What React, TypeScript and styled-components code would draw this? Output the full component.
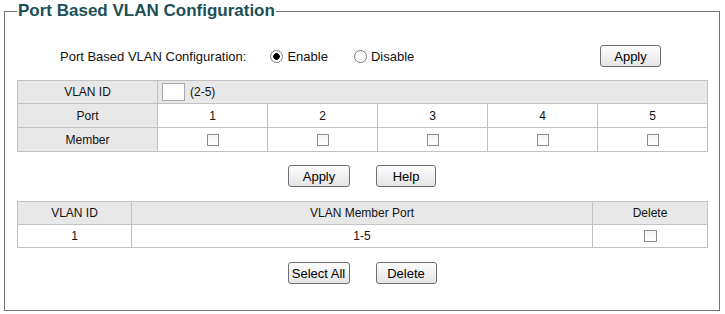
import React from "react";
import styled, { createGlobalStyle } from "styled-components";

const GlobalStyle = createGlobalStyle`
  html, body { margin: 0; padding: 0; background: #ffffff; }
  body { font-family: "Liberation Sans", Arial, sans-serif; color: #111; }
  * { box-sizing: border-box; }
`;

const Frame = styled.fieldset`
  margin: 0 0 0 4px;
  width: 716px;
  height: 311px;
  border: 1px solid #737373;
  padding: 0 12px;
  min-width: 0;
`;

const Legend = styled.legend`
  margin-left: 0;
  padding: 0 1px;
  font-size: 17px;
  line-height: 22px;
  font-weight: bold;
  color: #1b5058;
`;

const ConfigRow = styled.div`
  display: flex;
  align-items: center;
  height: 22px;
  margin-top: 23px;
  padding-left: 43px;
  padding-right: 46px;
  font-size: 13px;
`;

const Label = styled.span`
  margin-right: 24px;
`;

const RadioLabel = styled.label<{ $gap?: number }>`
  display: inline-flex;
  align-items: center;
  gap: 4px;
  margin-right: ${(p) => p.$gap ?? 0}px;
`;

const Radio = styled.input.attrs({ type: "radio" })`
  appearance: none;
  margin: 0;
  width: 13px;
  height: 13px;
  border: 1px solid #7c7c7c;
  border-radius: 50%;
  background: #fff;
  &:checked {
    background: radial-gradient(circle, #000 0 3px, #fff 3.6px);
  }
`;

const Spacer = styled.div`
  flex: 1;
`;

const Button = styled.button<{ $w?: number }>`
  width: ${(p) => p.$w ?? 61}px;
  height: 22px;
  padding: 0;
  font-family: "Liberation Sans", Arial, sans-serif;
  font-size: 13px;
  color: #000;
  border: 1px solid #6e6e6e;
  border-radius: 3px;
  background: linear-gradient(#fdfdfd, #e4e4e4);
`;

const Grid = styled.table<{ $mt: number }>`
  width: 690px;
  margin-top: ${(p) => p.$mt}px;
  border-collapse: collapse;
  table-layout: fixed;
  font-size: 12px;
`;

const Cell = styled.td<{ $head?: boolean; $h?: number; $left?: boolean }>`
  border: 1px solid #c2c2c2;
  padding: 0;
  height: ${(p) => p.$h ?? 24}px;
  text-align: ${(p) => (p.$left ? "left" : "center")};
  vertical-align: middle;
  background: ${(p) => (p.$head ? "#e8e8e8" : "#ffffff")};
  color: #111;
`;

const IdBox = styled.div`
  display: flex;
  align-items: center;
  gap: 5px;
  padding-left: 4px;
`;

const TextBox = styled.input.attrs({ type: "text" })`
  width: 23px;
  height: 18px;
  margin: 0;
  border: 1px solid #a9a9a9;
  background: #fff;
  padding: 0;
`;

const Check = styled.input.attrs({ type: "checkbox" })`
  appearance: none;
  display: block;
  margin: 0 auto;
  width: 12px;
  height: 12px;
  border: 1px solid #8c8c8c;
  background: linear-gradient(#f4f4f4, #ffffff);
`;

const ButtonRow = styled.div<{ $mt: number }>`
  display: flex;
  justify-content: center;
  gap: 26px;
  margin-top: ${(p) => p.$mt}px;
  height: 22px;
`;

const ports = [1, 2, 3, 4, 5];

export default function App() {
  return (
    <>
      <GlobalStyle />
      <Frame>
        <Legend>Port Based VLAN Configuration</Legend>
        <ConfigRow>
          <Label>Port Based VLAN Configuration:</Label>
          <RadioLabel $gap={26}>
            <Radio name="pbv" defaultChecked />
            Enable
          </RadioLabel>
          <RadioLabel>
            <Radio name="pbv" />
            Disable
          </RadioLabel>
          <Spacer />
          <Button>Apply</Button>
        </ConfigRow>

        <Grid $mt={13}>
          <colgroup>
            <col style={{ width: 140 }} />
            {ports.map((p) => (
              <col key={p} style={{ width: 110 }} />
            ))}
          </colgroup>
          <tbody>
            <tr>
              <Cell $head $h={23}>VLAN ID</Cell>
              <Cell $head $h={23} $left colSpan={5}>
                <IdBox>
                  <TextBox />
                  <span>(2-5)</span>
                </IdBox>
              </Cell>
            </tr>
            <tr>
              <Cell $head>Port</Cell>
              {ports.map((p) => (
                <Cell key={p}>{p}</Cell>
              ))}
            </tr>
            <tr>
              <Cell $head>Member</Cell>
              {ports.map((p) => (
                <Cell key={p}>
                  <Check />
                </Cell>
              ))}
            </tr>
          </tbody>
        </Grid>

        <ButtonRow $mt={13}>
          <Button $w={62}>Apply</Button>
          <Button $w={60}>Help</Button>
        </ButtonRow>

        <Grid $mt={14}>
          <colgroup>
            <col style={{ width: 114 }} />
            <col style={{ width: 461 }} />
            <col style={{ width: 115 }} />
          </colgroup>
          <tbody>
            <tr>
              <Cell $head $h={23}>VLAN ID</Cell>
              <Cell $head $h={23}>VLAN Member Port</Cell>
              <Cell $head $h={23}>Delete</Cell>
            </tr>
            <tr>
              <Cell $h={23}>1</Cell>
              <Cell $h={23}>1-5</Cell>
              <Cell $h={23}>
                <Check style={{ width: 13, height: 12 }} />
              </Cell>
            </tr>
          </tbody>
        </Grid>

        <ButtonRow $mt={14}>
          <Button $w={62}>Select All</Button>
          <Button $w={61}>Delete</Button>
        </ButtonRow>
      </Frame>
    </>
  );
}
